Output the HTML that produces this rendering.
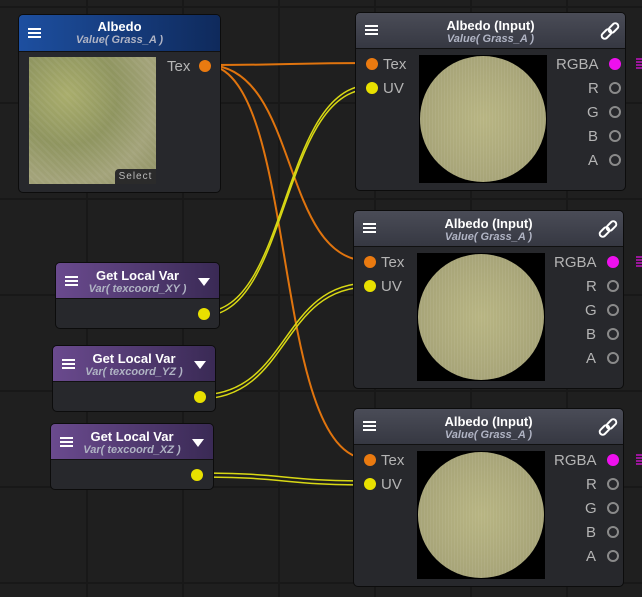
<!DOCTYPE html><html><head><style>
body{margin:0;width:642px;height:597px;overflow:hidden;background:#1f1f1f;font-family:"Liberation Sans",sans-serif;position:relative;
background-image:linear-gradient(#181818 2px,transparent 2px),linear-gradient(90deg,#181818 2px,transparent 2px);background-size:96px 96px;background-position:-10px 6px}
.n{position:absolute;background:#27282c;border:1px solid #0c0c0c;border-radius:5px;box-sizing:border-box;overflow:hidden}
.h{position:absolute;left:0;right:0;top:0;border-bottom:1px solid #111;text-align:center;color:#fff;font-weight:bold;font-size:13px}
.h .s{font-style:italic;font-weight:bold;font-size:11px;color:#b0b4c4;margin-top:0px}
.ham{position:absolute;left:9px;width:13px;height:2px;background:#fff;box-shadow:0 4px #fff,0 8px #fff}
.lbl{position:absolute;color:#b4b4b4;font-size:15px}
.dot{position:absolute;width:12px;height:12px;border-radius:50%}
.o{position:absolute;width:8px;height:8px;border:2px solid #8a8a8a;border-radius:50%}
.pv{position:absolute;background:#000;width:128px;height:128px}
.pv div{position:absolute;left:1px;top:1px;width:126px;height:126px;border-radius:50%;background:repeating-linear-gradient(90deg,rgba(255,255,255,.06) 0 1px,transparent 1px 3px),radial-gradient(circle,#b8b583 0,#aaa77a 60%,#a09e74 100%)}
.tri{position:absolute;width:0;height:0;border-left:6px solid transparent;border-right:6px solid transparent;border-top:8px solid #fff}
.lk{position:absolute;right:5px;top:8px}
</style></head><body>
<svg width="642" height="597" style="position:absolute;left:0;top:0">
<g fill="none" stroke="#e0740e" stroke-width="2">
<path d="M210 65 C290 65,290 63,371 63"/>
<path d="M210 65 C300 70,280 261,369 261"/>
<path d="M210 65 C300 80,270 459,369 459"/>
</g>
<g fill="none" stroke="#d8d814" stroke-width="1.5">
<path d="M203 312 C290 312,280 85,371 85"/><path d="M203 316 C290 316,280 89,371 89"/>
<path d="M199 395 C290 395,280 283,369 283"/><path d="M199 399 C290 399,280 287,369 287"/>
<path d="M196 473 C290 473,280 481,369 481"/><path d="M196 477 C290 477,280 485,369 485"/>
</g>
<g stroke="#e010e0" stroke-width="1.3">
<path d="M636 59H642M636 62H642M636 65H642M636 68H642"/>
<path d="M636 257H642M636 260H642M636 263H642M636 266H642"/>
<path d="M636 455H642M636 458H642M636 461H642M636 464H642"/>
</g>
</svg>

<div class="n" style="left:18px;top:14px;width:203px;height:179px">
<div class="h" style="height:36px;background:linear-gradient(90deg,#1d4fa0,#0f2a5c)"><div class="ham" style="top:13px"></div><div style="margin-top:4px">Albedo</div><div class="s">Value( Grass_A )</div></div>
<div style="position:absolute;left:10px;top:42px;width:127px;height:127px;background:repeating-linear-gradient(45deg,rgba(255,255,255,.05) 0 2px,transparent 2px 5px),radial-gradient(circle at 30% 30%,#a9ad6c,#8f9560 40%,#a3a37a 70%,#8e9062);"></div>
<div style="position:absolute;left:96px;top:154px;width:41px;height:15px;background:#2b2b2b;border-top-left-radius:4px;color:#bbb;font-size:10px;line-height:15px;text-align:center;letter-spacing:1px">Select</div>
<div class="lbl" style="left:148px;top:43px">Tex</div>
<div class="dot" style="left:180px;top:45px;background:#ea7a10"></div>
</div>

<div class="n" style="left:355px;top:12px;width:271px;height:179px">
<div class="h" style="height:35px;background:linear-gradient(#4a4c57,#363842)"><div class="ham" style="top:12px"></div><div style="margin-top:5px">Albedo (Input)</div><div class="s">Value( Grass_A )</div><svg class="lk" width="20" height="20" viewBox="0 0 20 20" fill="none" stroke="#fff" stroke-width="2"><rect x="1" y="10" width="11" height="6" rx="3" transform="rotate(-45 6.5 13)"/><rect x="8" y="4" width="11" height="6" rx="3" transform="rotate(-45 13.5 7)"/></svg></div>
<div class="dot" style="left:10px;top:45px;background:#ea7a10"></div><div class="lbl" style="left:27px;top:43px">Tex</div>
<div class="dot" style="left:10px;top:69px;background:#e8e000"></div><div class="lbl" style="left:27px;top:67px">UV</div>
<div class="pv" style="left:63px;top:42px"><div></div></div>
<div class="lbl" style="left:200px;top:43px">RGBA</div><div class="dot" style="left:253px;top:45px;background:#ee10ee"></div>
<div class="lbl" style="left:232px;top:67px">R</div><div class="o" style="left:253px;top:69px"></div>
<div class="lbl" style="left:231px;top:91px">G</div><div class="o" style="left:253px;top:93px"></div>
<div class="lbl" style="left:232px;top:115px">B</div><div class="o" style="left:253px;top:117px"></div>
<div class="lbl" style="left:232px;top:139px">A</div><div class="o" style="left:253px;top:141px"></div>
</div>

<div class="n" style="left:353px;top:210px;width:271px;height:179px">
<div class="h" style="height:35px;background:linear-gradient(#4a4c57,#363842)"><div class="ham" style="top:12px"></div><div style="margin-top:5px">Albedo (Input)</div><div class="s">Value( Grass_A )</div><svg class="lk" width="20" height="20" viewBox="0 0 20 20" fill="none" stroke="#fff" stroke-width="2"><rect x="1" y="10" width="11" height="6" rx="3" transform="rotate(-45 6.5 13)"/><rect x="8" y="4" width="11" height="6" rx="3" transform="rotate(-45 13.5 7)"/></svg></div>
<div class="dot" style="left:10px;top:45px;background:#ea7a10"></div><div class="lbl" style="left:27px;top:43px">Tex</div>
<div class="dot" style="left:10px;top:69px;background:#e8e000"></div><div class="lbl" style="left:27px;top:67px">UV</div>
<div class="pv" style="left:63px;top:42px"><div></div></div>
<div class="lbl" style="left:200px;top:43px">RGBA</div><div class="dot" style="left:253px;top:45px;background:#ee10ee"></div>
<div class="lbl" style="left:232px;top:67px">R</div><div class="o" style="left:253px;top:69px"></div>
<div class="lbl" style="left:231px;top:91px">G</div><div class="o" style="left:253px;top:93px"></div>
<div class="lbl" style="left:232px;top:115px">B</div><div class="o" style="left:253px;top:117px"></div>
<div class="lbl" style="left:232px;top:139px">A</div><div class="o" style="left:253px;top:141px"></div>
</div>

<div class="n" style="left:353px;top:408px;width:271px;height:179px">
<div class="h" style="height:35px;background:linear-gradient(#4a4c57,#363842)"><div class="ham" style="top:12px"></div><div style="margin-top:5px">Albedo (Input)</div><div class="s">Value( Grass_A )</div><svg class="lk" width="20" height="20" viewBox="0 0 20 20" fill="none" stroke="#fff" stroke-width="2"><rect x="1" y="10" width="11" height="6" rx="3" transform="rotate(-45 6.5 13)"/><rect x="8" y="4" width="11" height="6" rx="3" transform="rotate(-45 13.5 7)"/></svg></div>
<div class="dot" style="left:10px;top:45px;background:#ea7a10"></div><div class="lbl" style="left:27px;top:43px">Tex</div>
<div class="dot" style="left:10px;top:69px;background:#e8e000"></div><div class="lbl" style="left:27px;top:67px">UV</div>
<div class="pv" style="left:63px;top:42px"><div></div></div>
<div class="lbl" style="left:200px;top:43px">RGBA</div><div class="dot" style="left:253px;top:45px;background:#ee10ee"></div>
<div class="lbl" style="left:232px;top:67px">R</div><div class="o" style="left:253px;top:69px"></div>
<div class="lbl" style="left:231px;top:91px">G</div><div class="o" style="left:253px;top:93px"></div>
<div class="lbl" style="left:232px;top:115px">B</div><div class="o" style="left:253px;top:117px"></div>
<div class="lbl" style="left:232px;top:139px">A</div><div class="o" style="left:253px;top:141px"></div>
</div>

<div class="n" style="left:55px;top:262px;width:165px;height:67px">
<div class="h" style="height:35px;background:linear-gradient(90deg,#6a4a8e,#3a2a55)"><div class="ham" style="top:13px"></div><div style="margin-top:5px">Get Local Var</div><div class="s">Var( texcoord_XY )</div><div class="tri" style="right:9px;top:15px"></div></div>
<div class="dot" style="left:142px;top:45px;background:#e8e000"></div>
</div>
<div class="n" style="left:52px;top:345px;width:164px;height:67px">
<div class="h" style="height:35px;background:linear-gradient(90deg,#6a4a8e,#3a2a55)"><div class="ham" style="top:13px"></div><div style="margin-top:5px">Get Local Var</div><div class="s">Var( texcoord_YZ )</div><div class="tri" style="right:9px;top:15px"></div></div>
<div class="dot" style="left:141px;top:45px;background:#e8e000"></div>
</div>
<div class="n" style="left:50px;top:423px;width:164px;height:67px">
<div class="h" style="height:35px;background:linear-gradient(90deg,#6a4a8e,#3a2a55)"><div class="ham" style="top:13px"></div><div style="margin-top:5px">Get Local Var</div><div class="s">Var( texcoord_XZ )</div><div class="tri" style="right:9px;top:15px"></div></div>
<div class="dot" style="left:140px;top:45px;background:#e8e000"></div>
</div>
</body></html>
